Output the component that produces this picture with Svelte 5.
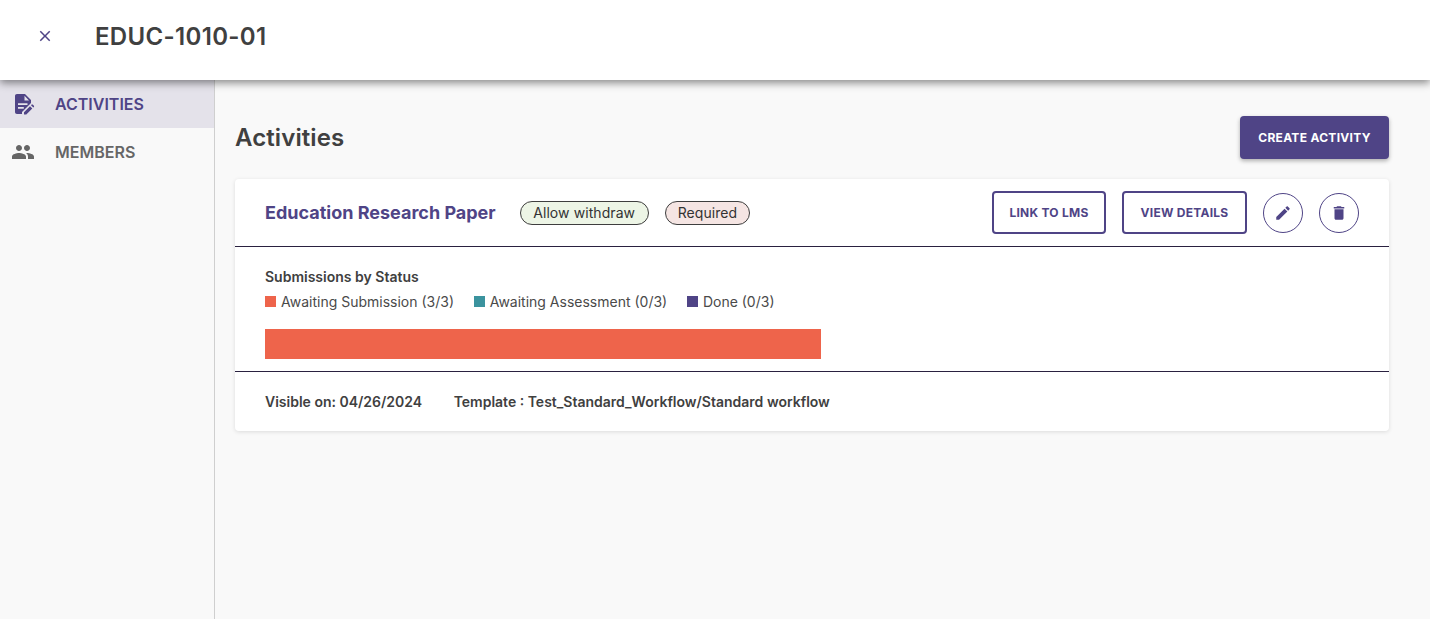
<script>
  const legend = [
    { label: 'Awaiting Submission (3/3)', color: '#ee644b' },
    { label: 'Awaiting Assessment (0/3)', color: '#3b939e' },
    { label: 'Done (0/3)', color: '#4f4486' }
  ];
</script>

<div class="page">
  <header class="top">
    <button class="close" aria-label="Close">
      <svg viewBox="0 0 24 24" width="18" height="18"><path d="M19 6.41L17.59 5 12 10.59 6.41 5 5 6.41 10.59 12 5 17.59 6.41 19 12 13.41 17.59 19 19 17.59 13.41 12z" /></svg>
    </button>
    <h1>EDUC-1010-01</h1>
  </header>
  <div class="shell">
    <nav class="side">
      <div class="nav active">
        <svg viewBox="0 0 24 24" width="24" height="24"><path d="M6 2H14l6 6v3l-9 9v2H6C4.800 22 4 21.100 4 20V4c0-1.100.8-2 2-2zM13.500 3.800V8.500H18zM7 11.300v1.600h9.500v-1.600zM7 15.100v1.600h5.800v-1.600z" fill-rule="evenodd" /><path d="M13 22.500v-2.300l6-6 2.300 2.300-6 6zM20 13.200l.6-.6c.3-.3.8-.3 1.100 0l1.200 1.200c.3.3.3.8 0 1.100l-.6.6z" /></svg>
        <span>ACTIVITIES</span>
      </div>
      <div class="nav">
        <svg viewBox="0 0 24 24" width="24" height="24"><path d="M16 11c1.660 0 2.990-1.340 2.990-3S17.660 5 16 5c-1.660 0-3 1.340-3 3s1.340 3 3 3zm-8 0c1.660 0 2.990-1.340 2.990-3S9.660 5 8 5C6.340 5 5 6.340 5 8s1.340 3 3 3zm0 2c-2.330 0-7 1.170-7 3.500V19h14v-2.500c0-2.330-4.670-3.500-7-3.500zm8 0c-.29 0-.62.02-.97.05 1.160.84 1.970 1.970 1.970 3.450V19h6v-2.500c0-2.330-4.670-3.500-7-3.500z" /></svg>
        <span>MEMBERS</span>
      </div>
    </nav>
    <main class="content">
      <div class="title-row">
        <h2>Activities</h2>
        <button class="primary">CREATE ACTIVITY</button>
      </div>
      <section class="card">
        <div class="card-head">
          <h3>Education Research Paper</h3>
          <span class="chip green">Allow withdraw</span>
          <span class="chip red">Required</span>
          <div class="actions">
            <button class="outline lms">LINK TO LMS</button>
            <button class="outline details">VIEW DETAILS</button>
            <button class="round" aria-label="Edit">
              <svg viewBox="0 0 24 24" width="18" height="18"><path d="M3 17.250V21h3.750L17.810 9.940l-3.750-3.750L3 17.250zM20.710 7.040c.39-.39.39-1.020 0-1.410l-2.340-2.340c-.39-.39-1.020-.39-1.410 0l-1.830 1.830 3.750 3.750 1.830-1.830z" /></svg>
            </button>
            <button class="round" aria-label="Delete">
              <svg viewBox="0 0 24 24" width="18" height="18"><path d="M6 19c0 1.100.9 2 2 2h8c1.100 0 2-.9 2-2V7H6v12zM19 4h-3.500l-1-1h-5l-1 1H5v2h14V4z" /></svg>
            </button>
          </div>
        </div>
        <div class="card-body">
          <div class="sub">Submissions by Status</div>
          <div class="legend">
            {#each legend as item}
              <span class="legend-item"><i style="background:{item.color}"></i>{item.label}</span>
            {/each}
          </div>
          <div class="bar"></div>
        </div>
        <div class="card-foot">
          <span>Visible on: 04/26/2024</span>
          <span>Template : Test_Standard_Workflow/Standard workflow</span>
        </div>
      </section>
    </main>
  </div>
</div>

<style>
  :global(body) { margin: 0; }
  .page {
    height: 619px;
    overflow: hidden;
    display: flex;
    flex-direction: column;
    font-family: Inter, "Liberation Sans", sans-serif;
    color: #404040;
    background: #f9f9f9;
  }
  button { font-family: inherit; cursor: pointer; }
  .top {
    position: relative;
    z-index: 2;
    flex: 0 0 80px;
    box-sizing: border-box;
    display: flex;
    align-items: center;
    background: #fff;
    box-shadow: 0 3px 8px rgba(0, 0, 0, 0.45);
    padding: 0 0 8px 36px;
  }
  .close {
    width: 18px;
    height: 18px;
    padding: 0;
    border: 0;
    background: none;
    display: flex;
    fill: #4f4486;
  }
  h1 {
    margin: 0 0 0 41px;
    font-size: 24px;
    font-weight: 600;
    letter-spacing: 0.33px;
    color: #404040;
  }
  .shell { flex: 1; display: flex; min-height: 0; }
  .side {
    flex: 0 0 214px;
    border-right: 1px solid #cfcfcf;
  }
  .nav {
    height: 48px;
    display: flex;
    align-items: center;
    padding-left: 11px;
    gap: 20px;
    font-size: 16px;
    font-weight: 600;
    color: #666;
    fill: #666;
  }
  .nav svg { overflow: visible; }
  .nav.active {
    background: #e4e2ea;
    color: #4f4486;
    fill: #4f4486;
  }
  .content { flex: 1; padding: 36px 41px 0 20px; min-width: 0; }
  .title-row {
    display: flex;
    justify-content: space-between;
    align-items: center;
    height: 43px;
    margin-bottom: 20px;
  }
  h2 { margin: 0; font-size: 24px; font-weight: 600; letter-spacing: 0.1px; color: #404040; }
  .primary {
    width: 149px;
    height: 43px;
    border: 0;
    border-radius: 4px;
    background: #4f4486;
    color: #fff;
    font-size: 12px;
    font-weight: 700;
    letter-spacing: 0.3px;
    box-shadow: 0 2px 4px rgba(0, 0, 0, 0.3);
  }
  .card {
    background: #fff;
    border-radius: 4px;
    box-shadow: 0 1px 4px rgba(0, 0, 0, 0.12);
  }
  .card-head {
    height: 67px;
    display: flex;
    align-items: center;
    padding: 0 30px;
    border-bottom: 1px solid #2a2140;
  }
  h3 {
    margin: 0 24px 0 0;
    font-size: 18px;
    font-weight: 700;
    color: #4f4486;
  }
  .chip {
    height: 24px;
    box-sizing: border-box;
    padding: 0 12.5px;
    margin-right: 16px;
    display: flex;
    align-items: center;
    border: 1px solid #3e3e3e;
    border-radius: 12px;
    font-size: 14px;
    letter-spacing: 0.08px;
    color: #333;
  }
  .green { background: #edf5e6; }
  .red { background: #f5e5e3; padding: 0 12px; }
  .actions { margin-left: auto; display: flex; align-items: center; gap: 16px; }
  .outline {
    height: 43px;
    padding: 0;
    background: #fff;
    border: 2px solid #4f4486;
    border-radius: 4px;
    color: #4f4486;
    font-size: 12px;
    font-weight: 700;
    letter-spacing: 0.25px;
  }
  .lms { width: 114px; }
  .details { width: 125px; }
  .round {
    width: 40px;
    height: 40px;
    padding: 0;
    background: #fff;
    border: 1px solid #4f4486;
    border-radius: 50%;
    display: flex;
    align-items: center;
    justify-content: center;
    fill: #4f4486;
  }
  .card-body {
    height: 125px;
    box-sizing: border-box;
    padding: 21px 30px 0;
    border-bottom: 1px solid #2a2140;
  }
  .sub { font-size: 14px; font-weight: 600; line-height: 17px; color: #404040; }
  .legend {
    display: flex;
    gap: 19.7px;
    margin-top: 8px;
    line-height: 17px;
    font-size: 14px;
    color: #4a4a4a;
  }
  .legend-item { display: flex; align-items: center; gap: 5px; }
  .legend-item i { width: 11px; height: 11px; display: block; }
  .bar { width: 556px; height: 30px; margin-top: 19px; background: #ee644b; }
  .card-foot {
    height: 59px;
    display: flex;
    align-items: center;
    gap: 31.5px;
    padding: 0 30px;
    font-size: 14px;
    font-weight: 600;
    color: #404040;
  }
</style>
